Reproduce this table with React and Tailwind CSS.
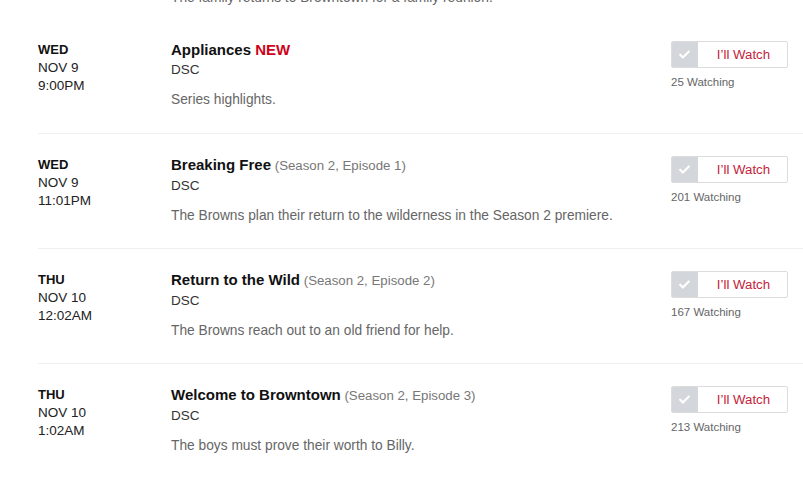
import React from "react";

const rows = [
  { day: "WED", date: "NOV 9", time: "9:00PM", title: "Appliances", isNew: true, ep: "", ch: "DSC", desc: "Series highlights.", watching: "25 Watching" },
  { day: "WED", date: "NOV 9", time: "11:01PM", title: "Breaking Free", ep: "(Season 2, Episode 1)", ch: "DSC", desc: "The Browns plan their return to the wilderness in the Season 2 premiere.", watching: "201 Watching" },
  { day: "THU", date: "NOV 10", time: "12:02AM", title: "Return to the Wild", ep: "(Season 2, Episode 2)", ch: "DSC", desc: "The Browns reach out to an old friend for help.", watching: "167 Watching" },
  { day: "THU", date: "NOV 10", time: "1:02AM", title: "Welcome to Browntown", ep: "(Season 2, Episode 3)", ch: "DSC", desc: "The boys must prove their worth to Billy.", watching: "213 Watching" },
];

function Check() {
  return (
    <svg width="13" height="13" viewBox="0 0 24 24" fill="none" stroke="white" strokeWidth="4" strokeLinecap="round" strokeLinejoin="round">
      <path d="M4 12.5l5 5L20 6.5" />
    </svg>
  );
}

export default function App() {
  return (
    <div className="bg-white w-[803px] h-[479px] overflow-hidden pl-[38px]" style={{ fontFamily: '"Liberation Sans", Arial, sans-serif' }}>
      <div className="h-[19px] overflow-hidden pl-[133px]">
        <div className="-mt-[11px] text-[13.75px] leading-[18px] text-[#666]">The family returns to Browntown for a family reunion.</div>
      </div>
      {rows.map((r, i) => (
        <div key={i} className={"flex h-[115px] pt-[22px] pr-[15px] " + (i < 3 ? "border-b border-[#efefef]" : "")}>
          <div className="w-[133px] text-[13px] leading-[18px] text-[#222]">
            <div className="font-bold text-[#111]">{r.day}</div>
            <div className="text-[13.5px]">{r.date}</div>
            <div className="text-[13.5px]">{r.time}</div>
          </div>
          <div className="flex-1">
            <div className="leading-[18px] whitespace-nowrap">
              <span className="font-bold text-[15px] text-[#111]">{r.title}</span>
              {r.isNew && <span className="font-bold text-[15px] text-[#d0021b]"> NEW</span>}
              {r.ep && <span className="text-[13.25px] text-[#777]"> {r.ep}</span>}
            </div>
            <div className="leading-[18px] text-[13.5px] text-[#333] mt-[2px]">{r.ch}</div>
            <div className="leading-[18px] text-[13.75px] text-[#666] mt-[12px]">{r.desc}</div>
          </div>
          <div className="w-[117px]">
            <div className="flex h-[27px] rounded-[2px] overflow-hidden border border-[#dcdcdc]">
              <div className="w-[27px] bg-[#d3d6da] flex items-center justify-center -ml-px -my-px h-[27px]">
                <Check />
              </div>
              <div className="flex-1 flex items-center justify-center pl-[2px] text-[13.25px] text-[#c4223a]">I’ll Watch</div>
            </div>
            <div className="mt-[7px] text-[11.5px] leading-[14px] text-[#666]">{r.watching}</div>
          </div>
        </div>
      ))}
    </div>
  );
}
